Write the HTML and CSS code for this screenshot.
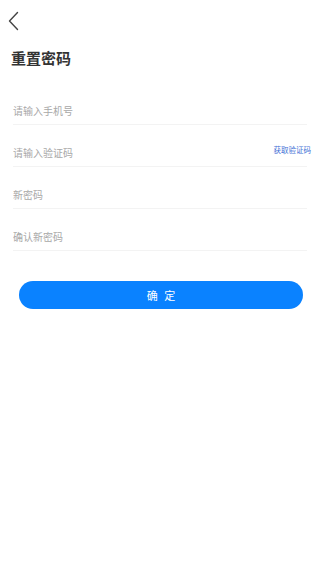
FILE: index.html
```html
<!DOCTYPE html>
<html lang="zh-CN">
<head>
    <meta charset="utf-8">
    <meta name="viewport" content="width=device-width, initial-scale=1">
    <title>重置密码</title>
    <link rel="stylesheet" href="styles.css">
</head>
<body>

<header class="top-bar">
    <a class="back" href="#">
        <svg width="12" height="20" viewBox="0 0 12 20">
            <polyline points="9.5,1.5 1.5,10 9.5,18.5" fill="none" stroke="#444" stroke-width="1.4" stroke-linecap="round" stroke-linejoin="round"/>
        </svg>
    </a>
</header>

<h2 class="page-title">重置密码</h2>

<form class="reset-form">
    <div class="form-row">
        <input type="tel" placeholder="请输入手机号">
    </div>
    <div class="form-row">
        <input type="text" placeholder="请输入验证码">
        <a class="get-code" href="#">获取验证码</a>
    </div>
    <div class="form-row">
        <input type="password" placeholder="新密码">
    </div>
    <div class="form-row">
        <input type="password" placeholder="确认新密码">
    </div>
    <button type="button" class="submit-button">确 定</button>
</form>

</body>
</html>
```

FILE: styles.css
```css
* {
    padding: 0;
    margin: 0;
    box-sizing: border-box;
    font-family: 'Noto Sans CJK SC', 'Noto Sans', sans-serif;
}

body {
    background-color: #fff;
    width: 320px;
    height: 587px;
}

.top-bar {
    height: 40px;
    display: flex;
    align-items: center;
    padding-left: 8px;
    padding-top: 2px;
}

.back {
    display: flex;
}

.page-title {
    font-size: 15px;
    line-height: 21px;
    font-weight: bold;
    color: #333;
    padding-left: 11px;
    margin-top: 7px;
}

.reset-form {
    padding: 0 13px;
    margin-top: 15px;
}

.form-row {
    height: 42px;
    display: flex;
    align-items: flex-end;
    justify-content: space-between;
    padding-bottom: 6px;
    border-bottom: 1px solid #f3f3f3;
}

.form-row input {
    flex: 1;
    border: none;
    outline: none;
    font-size: 10px;
    line-height: 14px;
    height: 14px;
    color: #333;
    background: transparent;
}

.form-row input::placeholder {
    color: #a8a8a8;
}

.get-code {
    font-size: 7.5px;
    line-height: 14px;
    color: #3f6fd6;
    text-decoration: none;
    margin-right: -4px;
    padding-bottom: 3px;
}

.submit-button {
    display: block;
    width: 284px;
    height: 28px;
    margin: 30px 0 0 6px;
    border: none;
    border-radius: 14px;
    background-color: #0a82ff;
    color: #fff;
    font-size: 11px;
    letter-spacing: 2px;
    text-indent: 2px;
    cursor: pointer;
}
```
